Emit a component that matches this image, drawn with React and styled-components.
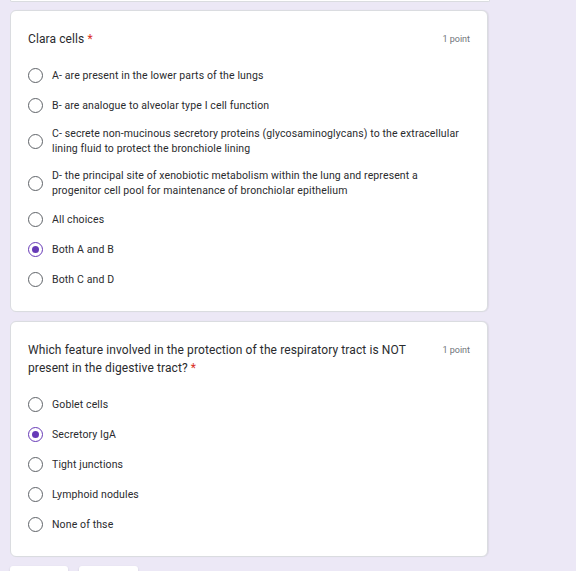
import React from "react";
import styled, { createGlobalStyle } from "styled-components";

const Global = createGlobalStyle`
  html, body { margin: 0; padding: 0; overflow: hidden; }
  body {
    background: #ece8f6;
    font-family: Roboto, "Liberation Sans", Arial, sans-serif;
    color: #202124;
  }
`;

const Page = styled.div`
  width: 576px;
  padding: 0 0 0 10px;
  box-sizing: border-box;
`;

const PrevCardEnd = styled.div`
  width: 478px;
  height: 1px;
  box-sizing: content-box;
  background: #fff;
  border: 1px solid #dadce0;
  border-top: none;
  border-radius: 0 0 6px 6px;
  margin-bottom: 8px;
`;

const Card = styled.section`
  width: 478px;
  box-sizing: border-box;
  background: #fff;
  border: 1px solid #dadce0;
  border-radius: 6px;
  padding: 19px 17px 17px 17px;
  margin-bottom: 9px;
  box-shadow: 1px 0 1px rgba(60, 64, 67, 0.08);
`;

const Header = styled.div`
  display: flex;
  align-items: flex-start;
  justify-content: space-between;
`;

const Title = styled.div`
  flex: 1;
  font-size: 12px;
  line-height: 18px;
  letter-spacing: 0.1px;
  color: #2a2b2e;
`;

const Required = styled.span`
  color: #d93025;
  padding-left: 3px;
`;

const Points = styled.div`
  font-size: 9px;
  line-height: 18px;
  color: #70757a;
  padding-left: 18px;
  white-space: nowrap;
`;

const Options = styled.div`
  margin-top: 12px;
  display: flex;
  flex-direction: column;
`;

const Option = styled.label`
  display: flex;
  align-items: center;
  min-height: 30px;
  gap: 9px;
`;

const Radio = styled.span`
  flex: none;
  width: 15px;
  height: 15px;
  box-sizing: border-box;
  border-radius: 50%;
  border: 1.5px solid ${(p) => (p.$checked ? "#673ab7" : "#5f6368")};
  display: flex;
  align-items: center;
  justify-content: center;
  &::after {
    content: "";
    width: 7px;
    height: 7px;
    border-radius: 50%;
    background: #673ab7;
    display: ${(p) => (p.$checked ? "block" : "none")};
  }
`;

const Label = styled.span`
  font-size: 10.5px;
  line-height: 15px;
  padding: 6px 6px 6px 0;
  color: #2a2b2e;
  letter-spacing: 0.12px;
`;

const ButtonRow = styled.div`
  display: flex;
  gap: 11px;
`;

const NavButton = styled.div`
  width: ${(p) => p.$w}px;
  height: 27px;
  background: #fff;
  border-radius: 3px;
  box-shadow: 0 1px 2px rgba(60, 64, 67, 0.2);
`;

const questions = [
  {
    title: "Clara cells",
    options: [
      "A- are present in the lower parts of the lungs",
      "B- are analogue to alveolar type I cell function",
      "C- secrete non-mucinous secretory proteins (glycosaminoglycans) to the extracellular lining fluid to protect the bronchiole lining",
      "D- the principal site of xenobiotic metabolism within the lung and represent a progenitor cell pool for maintenance of bronchiolar epithelium",
      "All choices",
      "Both A and B",
      "Both C and D",
    ],
    checked: 5,
  },
  {
    title:
      "Which feature involved in the protection of the respiratory tract is NOT present in the digestive tract?",
    options: [
      "Goblet cells",
      "Secretory IgA",
      "Tight junctions",
      "Lymphoid nodules",
      "None of thse",
    ],
    checked: 1,
  },
];

export default function App() {
  return (
    <>
      <Global />
      <Page>
        <PrevCardEnd />
        {questions.map((q, i) => (
          <Card key={i}>
            <Header>
              <Title>
                {q.title}
                <Required>*</Required>
              </Title>
              <Points>1 point</Points>
            </Header>
            <Options>
              {q.options.map((o, j) => (
                <Option key={j}>
                  <Radio $checked={j === q.checked} />
                  <Label>{o}</Label>
                </Option>
              ))}
            </Options>
          </Card>
        ))}
        <ButtonRow>
          <NavButton $w={58} />
          <NavButton $w={59} />
        </ButtonRow>
      </Page>
    </>
  );
}
